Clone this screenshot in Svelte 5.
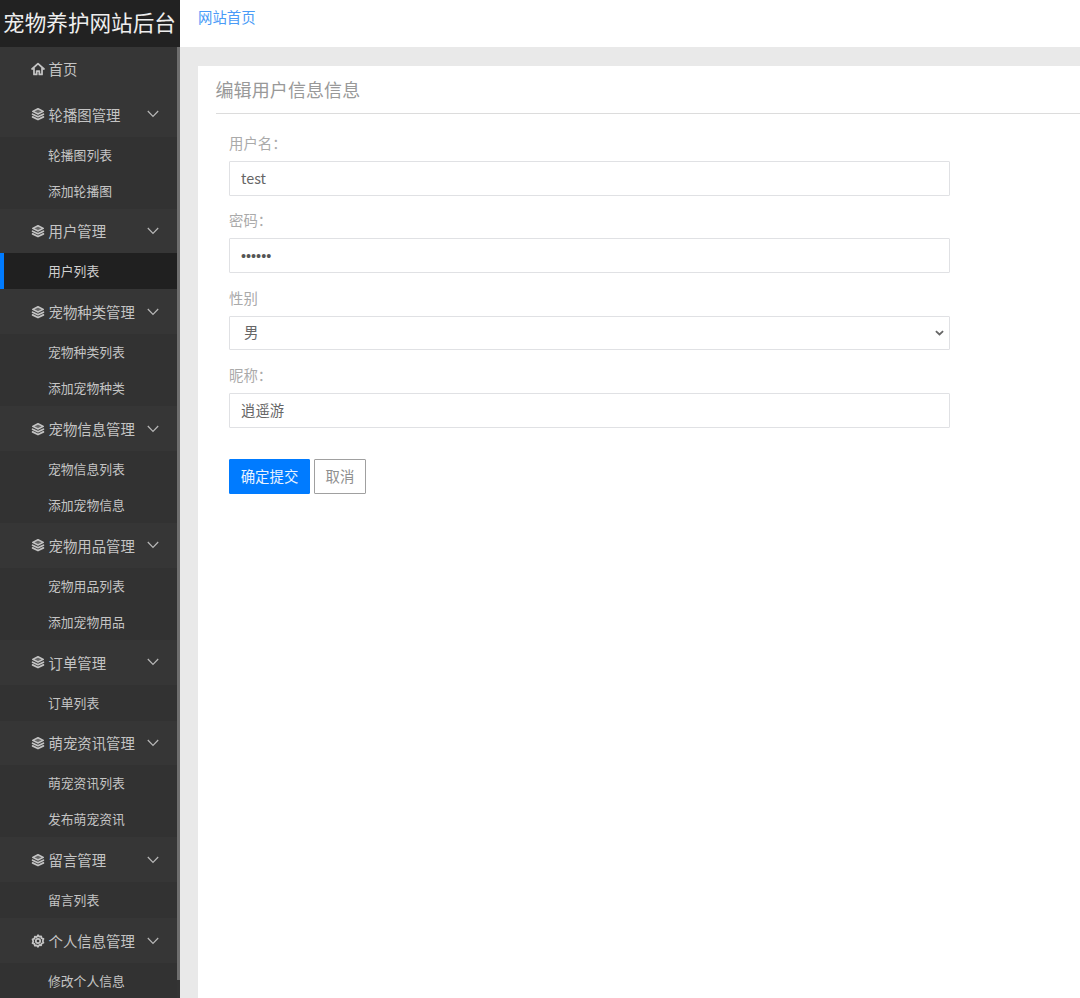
<script>
  const menu = [
    { label: '首页', icon: 'home', subs: [] },
    { label: '轮播图管理', icon: 'layers', subs: ['轮播图列表', '添加轮播图'] },
    { label: '用户管理', icon: 'layers', subs: ['用户列表'], active: '用户列表' },
    { label: '宠物种类管理', icon: 'layers', subs: ['宠物种类列表', '添加宠物种类'] },
    { label: '宠物信息管理', icon: 'layers', subs: ['宠物信息列表', '添加宠物信息'] },
    { label: '宠物用品管理', icon: 'layers', subs: ['宠物用品列表', '添加宠物用品'] },
    { label: '订单管理', icon: 'layers', subs: ['订单列表'] },
    { label: '萌宠资讯管理', icon: 'layers', subs: ['萌宠资讯列表', '发布萌宠资讯'] },
    { label: '留言管理', icon: 'layers', subs: ['留言列表'] },
    { label: '个人信息管理', icon: 'gear', subs: ['修改个人信息'] }
  ];
</script>

<div class="page">
  <aside class="sidebar">
    <div class="brand">宠物养护网站后台</div>
    <div class="menu-wrap">
      <nav class="menu">
        {#each menu as item}
          <div class="row">
            <svg class="icon" viewBox="0 0 16 16" fill="none" stroke="currentColor" stroke-width="2" stroke-linejoin="round" stroke-linecap="round">
              {#if item.icon === 'home'}
                <path d="M1.200 8 8 1.800 14.800 8M3.400 7v7.200h3.100v-3.800h3v3.800h3.100V7" />
              {:else if item.icon === 'layers'}
                <path d="M8 2 14 5 8 8 2 5z" fill="currentColor" fill-opacity="0.350" stroke-width="1.800" />
                <path d="M1.800 8.200 8 11.200l6.200-3M1.800 11.300 8 14.300l6.200-3" stroke-width="2" />
              {:else}
                <circle cx="8" cy="8" r="2.500" stroke-width="2" />
                <path d="M8 1.300l1.400 1.800 2.200-.5.500 2.200 2.100.8-.8 2.400.8 2-2.100.8-.5 2.100-2.200-.5L8 14.700l-1.400-1.800-2.200.5-.5-2.100-2.100-.8.800-2-.8-2.400 2.100-.8.500-2.200 2.200.5z" stroke-width="2" />
              {/if}
            </svg>
            <span class="row-label">{item.label}</span>
            {#if item.subs.length}
              <svg class="chevron" viewBox="0 0 12 8" fill="none" stroke="currentColor" stroke-width="1.200">
                <path d="M.8 1 6 6.400 11.200 1" />
              </svg>
            {/if}
          </div>
          {#if item.subs.length}
            <div class="subs">
              {#each item.subs as sub}
                <div class="sub" class:active={item.active === sub}>{sub}</div>
              {/each}
            </div>
          {/if}
        {/each}
      </nav>
      <div class="scrollbar"></div>
    </div>
  </aside>

  <main class="main">
    <header class="topbar"><a href="#home" class="home-link">网站首页</a></header>
    <section class="content">
      <div class="card">
        <h1 class="title">编辑用户信息信息</h1>
        <form class="form">
          <label class="field">
            <span class="label">用户名：</span>
            <input class="control" type="text" value="test" />
          </label>
          <label class="field">
            <span class="label">密码：</span>
            <input class="control password" type="password" value="123456" />
          </label>
          <label class="field">
            <span class="label">性别</span>
            <span class="select-wrap">
              <select class="control select">
                <option>男</option>
                <option>女</option>
              </select>
              <svg class="select-arrow" viewBox="0 0 10 6" fill="none" stroke="currentColor" stroke-width="2">
                <path d="M1 1l4 3.600L9 1" />
              </svg>
            </span>
          </label>
          <label class="field">
            <span class="label">昵称：</span>
            <input class="control" type="text" value="逍遥游" />
          </label>
          <div class="actions">
            <button type="button" class="btn primary">确定提交</button>
            <button type="button" class="btn ghost">取消</button>
          </div>
        </form>
      </div>
    </section>
  </main>
</div>

<style>
  :global(body) {
    margin: 0;
    background: #fff;
    overflow: hidden;
  }
  .page {
    display: flex;
    width: 1080px;
    height: 998px;
    overflow: hidden;
    font-family: "Noto Sans CJK SC", "Noto Sans", sans-serif;
  }
  .sidebar {
    width: 180px;
    flex: none;
    display: flex;
    flex-direction: column;
    background: #343434;
  }
  .brand {
    height: 47px;
    flex: none;
    background: #222;
    color: #eee;
    font-size: 21.600px;
    line-height: 43px;
    text-align: center;
    white-space: nowrap;
    box-sizing: border-box;
    padding-right: 1px;
  }
  .menu-wrap {
    position: relative;
    flex: 1;
    overflow: hidden;
  }
  .menu {
    width: 177px;
  }
  .row {
    height: 44.800px;
    box-sizing: border-box;
    padding: 0 16px 0 31px;
    display: flex;
    align-items: center;
    color: #c4c4c4;
    background: #363636;
    font-size: 14.400px;
  }
  .row-label {
    flex: 1;
    white-space: nowrap;
    position: relative;
    left: 0.500px;
  }
  .row:first-child .row-label {
    top: -1px;
  }
  .icon {
    width: 14px;
    height: 14px;
    flex: none;
    margin-right: 3px;
  }
  .chevron {
    width: 12px;
    height: 8px;
    flex: none;
    color: #b8b8b8;
    margin-right: 2px;
  }
  .subs {
    background: #323232;
  }
  .sub {
    height: 36px;
    box-sizing: border-box;
    padding-left: 48px;
    line-height: 36px;
    font-size: 12.800px;
    color: #c4c4c4;
    white-space: nowrap;
  }
  .sub.active {
    background: #202020;
    border-left: 4px solid #007bff;
    padding-left: 44px;
    color: #d0d0d0;
  }
  .scrollbar {
    position: absolute;
    top: 0;
    right: 0;
    width: 3px;
    height: 933px;
    background: #6e6e6e;
  }
  .main {
    flex: 1;
    min-width: 0;
    display: flex;
    flex-direction: column;
  }
  .topbar {
    height: 47px;
    flex: none;
    background: #fff;
    padding-left: 18px;
    box-sizing: border-box;
  }
  .home-link {
    color: #4a9bf7;
    font-size: 14.400px;
    line-height: 33px;
    text-decoration: none;
  }
  .content {
    flex: 1;
    background: #e9e9e9;
    padding: 19px 0 0 18px;
    display: flex;
  }
  .card {
    flex: 1;
    background: #fff;
    padding: 0 0 0 18px;
  }
  .title {
    margin: 0;
    height: 48px;
    box-sizing: border-box;
    border-bottom: 1px solid #dcdcdc;
    font-size: 18px;
    font-weight: 400;
    line-height: 46px;
    color: #999;
    letter-spacing: 0.100px;
    text-indent: -0.500px;
  }
  .form {
    width: 721px;
    margin-left: 13px;
    padding-top: 17px;
  }
  .field {
    display: block;
    height: 77.330px;
  }
  .label {
    display: block;
    height: 30px;
    line-height: 24px;
    font-size: 14.400px;
    color: #aaa;
  }
  .control {
    display: block;
    width: 100%;
    height: 34.600px;
    box-sizing: border-box;
    border: 1px solid #e0e1e4;
    border-radius: 1px;
    padding: 0 11px 2px;
    background: #fff;
    color: #666;
    font-family: inherit;
    font-size: 14.400px;
    outline: none;
  }
  .password {
    font-family: "Liberation Sans", sans-serif;
    padding-bottom: 0;
    color: #555;
  }
  .select-wrap {
    display: block;
    position: relative;
  }
  .select {
    appearance: none;
    padding-left: 14px;
  }
  .select-arrow {
    position: absolute;
    right: 6px;
    top: 14px;
    width: 9px;
    height: 6px;
    color: #666;
    pointer-events: none;
  }
  .actions {
    display: flex;
    gap: 4px;
    padding-top: 19px;
  }
  .btn {
    height: 35px;
    padding: 0 0 3px;
    font-family: inherit;
    font-size: 14.400px;
    border-radius: 1px;
    cursor: pointer;
  }
  .primary {
    width: 81px;
    background: #007bff;
    border: 1px solid #007bff;
    color: #eaf3ff;
  }
  .ghost {
    width: 52px;
    background: #fff;
    border: 1px solid #a0a0a0;
    color: #8f8f8f;
  }
</style>
